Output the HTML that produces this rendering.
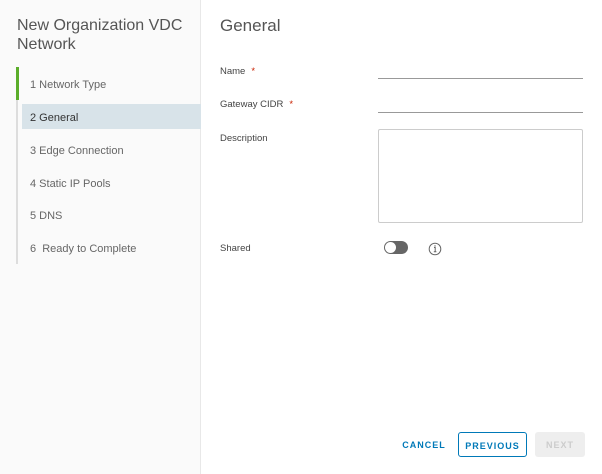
<!DOCTYPE html>
<html><head><style>
*{margin:0;padding:0;box-sizing:border-box}
body{width:602px;height:474px;background:#fff;font-family:"Liberation Sans",sans-serif;position:relative;overflow:hidden;color:#333}
.side{position:absolute;left:0;top:0;width:201px;height:474px;background:#fafafa;border-right:1px solid #e8e8e8}
.t{position:absolute;left:17px;top:16px;font-size:16px;line-height:19px;color:#555}
.rail{position:absolute;left:16px;top:67px;width:2px;height:197px;background:#ddd}
.rail2{position:absolute;left:16px;top:67px;width:3px;height:33px;background:#5aad2a}
.st{position:absolute;left:30px;font-size:11px;color:#666}
.sel{position:absolute;left:22px;top:104px;width:179px;height:25px;background:#d8e3e9}
.h{position:absolute;left:220px;top:16px;font-size:17px;color:#555}
.l{position:absolute;left:220px;font-size:9.5px;color:#444}
.l b{color:#c92100;font-weight:normal;margin-left:6px}
.in{position:absolute;left:378px;width:205px;border-bottom:1px solid #999}
.ta{position:absolute;left:378px;top:129px;width:205px;height:94px;border:1px solid #ccc;border-radius:2px}
.tg{position:absolute;left:384px;top:241px;width:24px;height:13px;border-radius:7px;background:#666}
.tg:after{content:"";position:absolute;left:1px;top:1px;width:11px;height:11px;border-radius:50%;background:#fff}
.btn{position:absolute;top:432px;height:25px;font-size:9px;font-weight:bold;letter-spacing:1px;text-align:center;line-height:26px}
</style></head><body>
<div class="side"></div>
<div class="t">New Organization VDC<br>Network</div>
<div class="rail"></div><div class="rail2"></div>
<div class="sel"></div>
<div class="st" style="top:79px">1 Network Type</div>
<div class="st" style="top:112px;color:#333">2 General</div>
<div class="st" style="top:145px">3 Edge Connection</div>
<div class="st" style="top:178px">4 Static IP Pools</div>
<div class="st" style="top:210px">5 DNS</div>
<div class="st" style="top:243px">6 &nbsp;Ready to Complete</div>
<div class="h">General</div>
<div class="l" style="top:66px">Name<b>*</b></div>
<div class="l" style="top:99px">Gateway CIDR<b>*</b></div>
<div class="l" style="top:133px">Description</div>
<div class="l" style="top:243px">Shared</div>
<div class="in" style="top:78px"></div>
<div class="in" style="top:112px"></div>
<div class="ta"></div>
<div class="tg"></div>
<svg style="position:absolute;left:428px;top:242px" width="14" height="14" viewBox="0 0 14 14"><circle cx="7" cy="7" r="5.8" fill="none" stroke="#666" stroke-width="1"/><path d="M6 5.5h1.2v4M5.8 9.7h2.6" stroke="#666" fill="none" stroke-width="1"/><circle cx="7" cy="4" r=".7" fill="#666"/></svg>
<div class="btn" style="left:400px;width:48px;color:#0079b8">CANCEL</div>
<div class="btn" style="left:458px;width:69px;border:1px solid #0079b8;border-radius:3px;color:#0079b8">PREVIOUS</div>
<div class="btn" style="left:535px;width:50px;background:#eee;border-radius:3px;color:#ccc">NEXT</div>
</body></html>
